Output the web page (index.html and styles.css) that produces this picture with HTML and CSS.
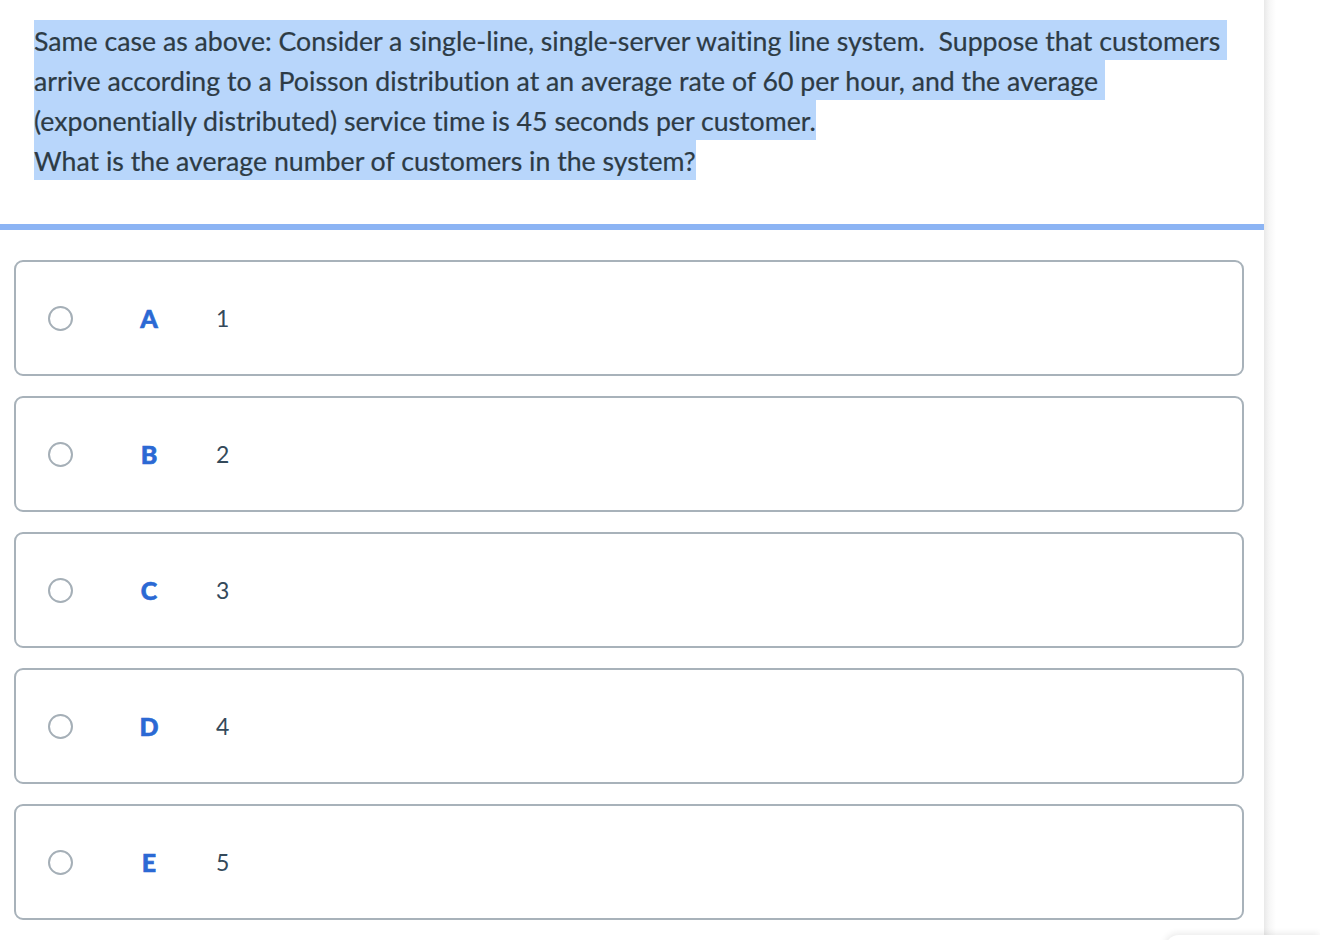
FILE: index.html
```html
<!DOCTYPE html>
<html lang="en">
<head>
<meta charset="utf-8">
<title>Question</title>
<link rel="stylesheet" href="styles.css">
</head>
<body>
<div class="page">
  <main class="main">
    <section class="question">
      <div class="qline sp">Same case as above: Consider a single-line, single-server waiting line system.&nbsp; Suppose that customers</div>
      <div class="qline sp">arrive according to a Poisson distribution at an average rate of 60 per hour, and the average</div>
      <div class="qline">(exponentially distributed) service time is 45 seconds per customer.</div>
      <div class="qline">What is the average number of customers in the system?</div>
    </section>
    <div class="divider"></div>
    <ul class="options">
      <li class="option"><span class="radio"></span><span class="letter">A</span><span class="value">1</span></li>
      <li class="option"><span class="radio"></span><span class="letter">B</span><span class="value">2</span></li>
      <li class="option"><span class="radio"></span><span class="letter">C</span><span class="value">3</span></li>
      <li class="option"><span class="radio"></span><span class="letter">D</span><span class="value">4</span></li>
      <li class="option"><span class="radio"></span><span class="letter">E</span><span class="value">5</span></li>
    </ul>
  </main>
  <aside class="side"></aside>
  <div class="floater"></div>
</div>
</body>
</html>
```
FILE: styles.css
```css
html, body {
  margin: 0;
  padding: 0;
  background: #fff;
  height: 940px;
  overflow: hidden;
}
.page {
  position: relative;
  display: flex;
  height: 940px;
  overflow: hidden;
  font-family: "Lato", "Liberation Sans", sans-serif;
  font-variant-ligatures: none;
  color: #2d3b45;
}
.main {
  width: 1264px;
  flex: none;
  background: #fff;
}
.side {
  flex: 1;
  background: linear-gradient(to right, #e9e9e9 0px, #f6f6f6 5px, #ffffff 12px);
}
.question {
  padding: 20px 0 0 34px;
  height: 224px;
  box-sizing: border-box;
}
.qline {
  width: fit-content;
  height: 40px;
  line-height: 43px;
  font-size: 26.7px;
  background: #b8d6fb;
  white-space: nowrap;
  -webkit-text-stroke: 0.2px #2d3b45;
}
.qline.sp { padding-right: 7px; }
.divider {
  height: 6px;
  background: #8cb4f4;
}
.options {
  list-style: none;
  margin: 0;
  padding: 30px 20px 0 14px;
  display: flex;
  flex-direction: column;
  gap: 20px;
}
.option {
  height: 112px;
  border: 2px solid #a8b2ba;
  border-radius: 9px;
  display: flex;
  align-items: center;
}
.radio {
  width: 21px;
  height: 21px;
  border: 2.5px solid #a5afb7;
  border-radius: 50%;
  margin-left: 32px;
  flex: none;
}
.letter {
  width: 40px;
  margin-left: 56px;
  text-align: center;
  font-weight: 900;
  font-size: 25px;
  color: #2b69d4;
  -webkit-text-stroke: 0.6px #2b69d4;
}
.value {
  margin-left: 47px;
  font-size: 23px;
  color: #34495a;
}
.floater {
  position: absolute;
  left: 1165px;
  top: 935px;
  width: 155px;
  height: 40px;
  border-radius: 14px 0 0 0;
  background: #fff;
  box-shadow: -1px -2px 6px rgba(0,0,0,0.08);
}
```
